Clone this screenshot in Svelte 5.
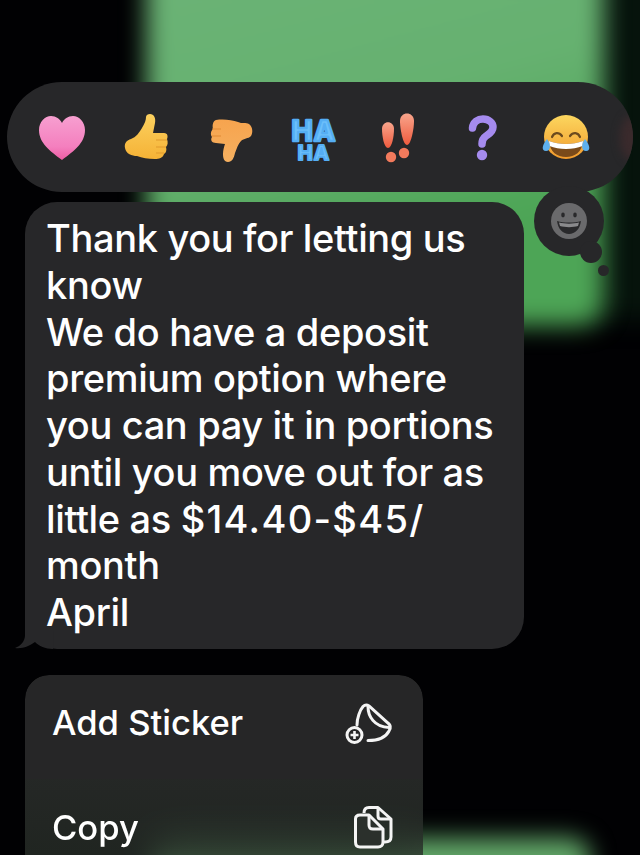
<script lang="ts">
	const lines = [
		'Thank you for letting us',
		'know',
		'We do have a deposit',
		'premium option where',
		'you can pay it in portions',
		'until you move out for as'
	];
</script>

<div class="screen">
	<div class="backdrop">
		<div class="green edge"></div>
		<div class="green top"></div>
		<div class="green bottom"></div>
	</div>

	<div class="content">
		<div class="reactions">
			<div class="slot">
				<svg viewBox="0 0 84 84" width="84" height="84">
					<defs>
						<linearGradient id="heart" x1="0" y1="0" x2="0" y2="1">
							<stop offset="0" stop-color="#f79fd0" />
							<stop offset="0.7" stop-color="#f47fbe" />
							<stop offset="1" stop-color="#ec5ca3" />
						</linearGradient>
					</defs>
					<path
						d="M42 64C30 55 19 47 19 34C19 26 25 20 31 20C36 20 40 23 42 27C44 23 48 20 53 20C59 20 65 26 65 34C65 47 54 55 42 64Z"
						fill="url(#heart)"
					/>
				</svg>
			</div>
			<div class="slot">
				<svg viewBox="0 0 84 84" width="84" height="84">
					<defs>
						<linearGradient id="thumb" x1="0" y1="0" x2="0" y2="1">
							<stop offset="0" stop-color="#fcd15f" />
							<stop offset="1" stop-color="#f5b236" />
						</linearGradient>
					</defs>
					<path
						d="M46 18C50 18 52 22 51 27L49 37L60 37C64 37 64 41 63 43C64 46 64 49 62 51C63 54 62 57 60 58C59 62 55 63 51 63C44 63 38 62 33 60C28 60 22 58 21 52C20 47 23 44 27 43C32 41 35 37 38 32C41 27 42 24 42 21C42 19 44 18 46 18Z"
						fill="url(#thumb)"
					/>
					<path d="M52 44H63M52 51H62M52 57H60" stroke="#e0992c" stroke-width="1" fill="none" />
				</svg>
			</div>
			<div class="slot">
				<svg viewBox="0 0 84 84" width="84" height="84">
					<defs>
						<linearGradient id="down" x1="0" y1="0" x2="0" y2="1">
							<stop offset="0" stop-color="#f7a44e" />
							<stop offset="1" stop-color="#f5b060" />
						</linearGradient>
					</defs>
					<path
						d="M28 24C36 23 44 24 50 26C54 28 58 26 61 28C65 31 65 37 63 40C60 43 56 42 53 45C50 48 49 52 47 57C46 62 44 66 40 66C36 66 35 62 35 58C35 54 36 51 37 48L28 47C24 47 22 44 24 41C22 38 23 35 25 33C24 29 25 25 28 24Z"
						fill="url(#down)"
					/>
					<path d="M24 33H33M24 40H33" stroke="#e18a35" stroke-width="1" fill="none" />
				</svg>
			</div>
			<div class="slot">
				<svg class="haha" viewBox="0 0 84 84" width="84" height="84">
					<text x="42" y="45" text-anchor="middle" class="ha-big">HA</text>
					<text x="42" y="64" text-anchor="middle" class="ha-small">HA</text>
				</svg>
			</div>
			<div class="slot">
				<svg viewBox="0 0 84 84" width="84" height="84">
					<defs>
						<linearGradient id="bang" x1="0" y1="0" x2="0" y2="1">
							<stop offset="0" stop-color="#f8a58c" />
							<stop offset="1" stop-color="#ef5b3e" />
						</linearGradient>
					</defs>
					<path d="M26 33C26 24 38 24 38 33C38 40 36 52 32 52C28 52 26 40 26 33Z" fill="url(#bang)" />
					<path d="M44 25C44 15 58 15 58 25C58 33 55 49 51 49C47 49 44 33 44 25Z" fill="url(#bang)" />
					<circle cx="35" cy="61" r="5.2" fill="#f27a5c" />
					<circle cx="48" cy="57" r="5.2" fill="#f27a5c" />
				</svg>
			</div>
			<div class="slot">
				<svg viewBox="0 0 84 84" width="84" height="84">
					<path
						d="M32.5 32C33 26 38 23 43 23C49 23 53 27 53 31C53 36 49 38 46 40C43 42 42 44 42 48"
						fill="none"
						stroke="#a58bee"
						stroke-width="7.5"
						stroke-linecap="round"
					/>
					<circle cx="42" cy="59" r="5.2" fill="#a58bee" />
				</svg>
			</div>
			<div class="slot">
				<svg viewBox="0 0 84 84" width="84" height="84">
					<defs>
						<linearGradient id="face" x1="0" y1="0" x2="0" y2="1">
							<stop offset="0" stop-color="#fcd75f" />
							<stop offset="1" stop-color="#f19a2c" />
						</linearGradient>
					</defs>
					<circle cx="42" cy="41" r="22" fill="url(#face)" />
					<path d="M28 41C30 36 35 36 38 40M46 40C49 36 54 36 56 41" fill="none" stroke="#6b4a1e" stroke-width="2.200" stroke-linecap="round" />
					<path d="M25 45C35 49 49 49 59 45C58 56 51 61 42 61C33 61 26 56 25 45Z" fill="#7a4a1a" />
					<path d="M25 45C35 49 49 49 59 45L58.5 50C49 54 35 54 25.500 50Z" fill="#fff" />
					<path d="M23 43C27 48 27 55 22 55C17 55 18 49 23 43Z" fill="#5db0ee" />
					<path d="M61 43C66 49 67 55 62 55C57 55 57 48 61 43Z" fill="#5db0ee" />
				</svg>
			</div>
			<div class="slot faded">
				<div class="red-ghost"></div>
			</div>
		</div>

		<div class="tail-circle">
			<svg viewBox="0 0 36 36" width="36" height="36">
				<circle cx="18" cy="18" r="18" fill="#6a6a6c" />
				<ellipse cx="12" cy="12" rx="1.800" ry="2.400" fill="#29292b" />
				<ellipse cx="24" cy="12" rx="1.800" ry="2.400" fill="#29292b" />
				<path d="M6 18C13 20 23 20 30 18C29 26 24 31 18 31C12 31 7 26 6 18Z" fill="#29292b" />
				<path d="M8 19.500C14 21 22 21 28 19.500L27 23C22 24.500 14 24.500 9 23Z" fill="#8a8a8c" />
			</svg>
		</div>
		<div class="tail-mid"></div>
		<div class="tail-dot"></div>

		<div class="bubble">
			<svg class="bubble-tail" viewBox="0 0 40 40" width="40" height="40">
				<path d="M10 0L10 26C10 32 6 37 0 39C8 40 14 37 20 33C24 37 30 40 38 40L40 0Z" fill="#272729" />
			</svg>
			<div class="message">
				{#each lines as line}
					<div>{line}</div>
				{/each}
				<div>little as <span class="price">$14.40-$45/</span></div>
				<div>month</div>
				<div>April</div>
			</div>
		</div>

		<div class="menu">
			<div class="row first">
				<span>Add Sticker</span>
				<svg viewBox="0 0 60 60" width="60" height="60">
					<path
						d="M17 33C17 26 20 18 23 14.500C25 12.500 27 12.500 29 14L48 31C51 33.500 51 36 49 39C46 45 40 48.500 28 48.500"
						fill="none"
						stroke="#f4f4f4"
						stroke-width="3"
						stroke-linecap="round"
					/>
					<path d="M28 14.500C28 24 34 35 49 35.500" fill="none" stroke="#f4f4f4" stroke-width="3" stroke-linecap="round" />
					<circle cx="14.500" cy="43" r="7.500" fill="none" stroke="#f4f4f4" stroke-width="3" />
					<path d="M14.500 39V47M10.500 43H18.500" stroke="#f4f4f4" stroke-width="2.600" />
				</svg>
			</div>
			<div class="row">
				<span>Copy</span>
				<svg viewBox="0 0 60 60" width="60" height="60">
					<path
						d="M24 16C24 12 26 10.500 29 10.500H38L51 22V40C51 43 49 45 45 45H43"
						fill="none"
						stroke="#f4f4f4"
						stroke-width="3"
						stroke-linejoin="round"
					/>
					<path d="M38 10.500V19C38 21 39 22 41 22H51" fill="none" stroke="#f4f4f4" stroke-width="3" />
					<path
						d="M20 18H29L43 32V45C43 48 41 50 38 50H20C17 50 15.500 48 15.500 45V22C15.500 19.500 17 18 20 18Z"
						fill="#2b302c"
						stroke="#f4f4f4"
						stroke-width="3"
						stroke-linejoin="round"
					/>
					<path d="M29 18V28C29 31 30 32 33 32H43" fill="none" stroke="#f4f4f4" stroke-width="3" />
				</svg>
			</div>
		</div>
	</div>
</div>

<style>
	:global(body) {
		margin: 0;
		background: #000;
	}

	.screen {
		position: relative;
		width: 640px;
		height: 855px;
		overflow: hidden;
		background: #010103;
		font-family: Inter, 'Liberation Sans', sans-serif;
		color: #fff;
	}

	.backdrop {
		position: absolute;
		inset: 0;
	}

	.green {
		position: absolute;
		filter: blur(12px);
	}

	.green.edge {
		left: 590px;
		top: -30px;
		width: 80px;
		height: 350px;
		background: #06130c;
	}

	.green.top {
		left: 146px;
		top: -30px;
		width: 458px;
		height: 356px;
		background: linear-gradient(165deg, #6bb376, #66b170 40%, #4da556 72%);
		border-radius: 0 0 24px 0;
	}

	.green.bottom {
		left: 150px;
		top: 838px;
		width: 440px;
		height: 60px;
		background: #63a96a;
		border-radius: 20px;
	}

	.content {
		position: relative;
		padding-top: 82px;
	}

	.reactions {
		display: flex;
		align-items: center;
		width: 626px;
		height: 110px;
		margin-left: 7px;
		padding-left: 13px;
		box-sizing: border-box;
		overflow: hidden;
		border-radius: 55px;
		background: #272729;
	}

	.slot {
		flex: 0 0 84px;
		display: flex;
		align-items: center;
		justify-content: center;
		height: 84px;
		margin-top: 1px;
	}

	.faded {
		margin-left: -4px;
	}

	.red-ghost {
		width: 22px;
		height: 44px;
		margin-left: -30px;
		border-radius: 50%;
		background: #3a2a2c;
		filter: blur(4px);
	}

	.haha text {
		font-weight: 800;
		fill: #6cc0fb;
		stroke: #55aef4;
		stroke-linejoin: round;
		letter-spacing: 1px;
	}

	.ha-big {
		font-size: 28px;
		stroke-width: 2.600px;
	}

	.ha-small {
		font-size: 20px;
		stroke-width: 2px;
	}

	.tail-circle {
		position: absolute;
		left: 534px;
		top: 186px;
		width: 70px;
		height: 70px;
		display: flex;
		align-items: center;
		justify-content: center;
		border-radius: 50%;
		background: #272729;
	}

	.tail-mid {
		position: absolute;
		left: 580px;
		top: 241px;
		width: 22px;
		height: 22px;
		border-radius: 50%;
		background: #272729;
	}

	.tail-dot {
		position: absolute;
		left: 598px;
		top: 265px;
		width: 11px;
		height: 11px;
		border-radius: 50%;
		background: #272729;
	}

	.bubble {
		position: relative;
		box-sizing: border-box;
		width: 499px;
		height: 447px;
		margin: 10px 0 0 25px;
		padding: 13px 0 0 21px;
		border-radius: 32px;
		background: #272729;
		font-size: 38px;
		font-weight: 500;
		line-height: 46.75px;
		letter-spacing: -0.35px;
	}

	.message {
		position: relative;
	}

	.price {
		letter-spacing: 1.3px;
	}

	.bubble-tail {
		position: absolute;
		left: -10px;
		bottom: 0;
	}

	.menu {
		width: 398px;
		margin: 26px 0 0 25px;
		border-radius: 24px 24px 0 0;
		overflow: hidden;
	}

	.row {
		display: flex;
		align-items: center;
		justify-content: space-between;
		box-sizing: border-box;
		height: 104px;
		padding: 0 25px 8px 27px;
		font-size: 34.6px;
		font-weight: 500;
		background: linear-gradient(rgba(40, 43, 41, 0.92), rgba(42, 50, 43, 0.72));
		backdrop-filter: blur(16px);
	}

	.row.first {
		background: #262627;
		padding-bottom: 10px;
	}

	.row svg {
		margin-right: -2px;
	}
</style>
